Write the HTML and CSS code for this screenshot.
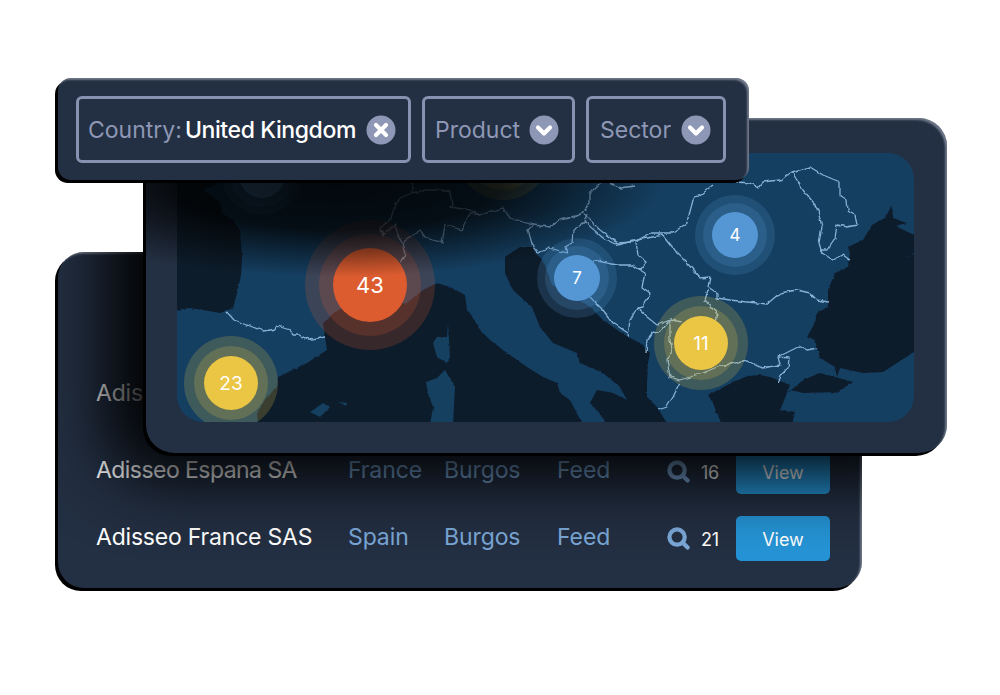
FILE: index.html
```html
<!DOCTYPE html>
<html lang="en">
<head>
<meta charset="utf-8">
<title>Supplier map</title>
<link rel="stylesheet" href="styles.css">
</head>
<body>
<main class="canvas">
  <section class="card table-card">
    <div class="row first-row">
      <span class="name">Adisseo</span>
    </div>
    <div class="row">
      <span class="name name-tight">Adisseo Espana SA</span><span class="link">France</span><span class="link">Burgos</span><span class="link">Feed</span>
      <span class="hits"><svg class="lens" viewBox="0 0 24 24"><circle cx="10.5" cy="10.5" r="8"/><path d="M16.5 16.5 21.5 21.5"/></svg><span class="count">16</span></span><button class="view">View</button>
    </div>
    <div class="row">
      <span class="name">Adisseo France SAS</span><span class="link">Spain</span><span class="link">Burgos</span><span class="link">Feed</span>
      <span class="hits"><svg class="lens" viewBox="0 0 24 24"><circle cx="10.5" cy="10.5" r="8"/><path d="M16.5 16.5 21.5 21.5"/></svg><span class="count">21</span></span><button class="view">View</button>
    </div>
    <div class="cast-shadow"></div>
  </section>

  <section class="card map-card">
    <div class="map">
      <svg class="geo" viewBox="177 153 737 269" aria-hidden="true">
        <defs>
          <filter id="rough" x="-5%" y="-5%" width="110%" height="110%">
            <feTurbulence type="fractalNoise" baseFrequency="0.14" numOctaves="2" seed="4"/>
            <feDisplacementMap in="SourceGraphic" scale="4" xChannelSelector="R" yChannelSelector="G"/>
          </filter>
          <filter id="coast" x="-5%" y="-5%" width="110%" height="110%">
            <feTurbulence type="fractalNoise" baseFrequency="0.22" numOctaves="2" seed="9"/>
            <feDisplacementMap in="SourceGraphic" scale="2.4" xChannelSelector="R" yChannelSelector="G"/>
          </filter>
        </defs>
        <g class="sea" filter="url(#coast)">
          <path d="M170 150H226L222 178 213 186 203 190 220 202 222 213 232 220 240 230 241 243 242 258 241 275 237 293 233 308 220 313 203 310 190 308 177 310H170Z"/>
          <path d="M258 425 257 413 266 398 277 387 278 377 293 370 307 363 327 350 323 323 337 310 360 306 385 308 407 303 423 290 437 283 450 287 465 295 467 310 470 313 480 330 490 340 507 353 527 367 543 377 557 383 560 393 570 400 583 425Z"/>
          <path d="M505 257 520 247 533 247 535 253 543 260 552 285 575 297 590 307 603 320 613 327 628 337 640 343 650 353 648 363 647 383 647 397 657 407 668 425H606L603 417 590 403 597 390 613 393 627 400 620 387 603 373 580 363 577 353 553 343 540 327 532 307 513 290 505 273Z"/>
          <path d="M708 395 722 388 733 382 748 376 760 375 770 377 790 385 783 403 780 410 795 412 792 425H722L713 403Z"/>
          <path d="M783 397 803 380 820 373 835 377 853 382 837 392 803 393 790 390Z"/>
          <path d="M872 225 885 218 892 205 893 218 907 223 895 226 914 235 920 235V250L907 257 920 252V350L914 352 883 372 863 373 840 368 837 377 835 367 820 358 815 340 807 337 815 323 817 313 828 307 828 290 835 273 848 267 850 253 848 247 863 240Z"/>
        </g>
        <g class="isle" filter="url(#coast)">
          <path d="M448 323 447 337 437 337 433 343 437 357 447 363 450 357Z"/>
          <path d="M445 370 437 378 426 382 428 393 433 407 430 425H453L455 387Z"/>
          <path d="M310 412 323 403 330 407 320 417Z"/>
          <path d="M338 402 347 403 346 406Z"/>
        </g>
        <g class="borders" filter="url(#rough)">
          <path d="M227 312 234 320 250 326 263 331 276 329 277 326 290 330 293 335 300 335 305 338 313 340 325 337"/>
          <path d="M412 183 412 193 425 190 440 190 450 192 452 205 450 207 470 210 480 215"/>
          <path d="M412 193 400 198 395 205 393 212 390 220 380 228 383 235 395 225 398 235 402 243 405 255 400 262"/>
          <path d="M402 243 420 230 425 237 442 243 445 225 462 230 470 213 480 215 503 208 510 218 533 225 550 227 560 220 580 215 590 203 590 193 600 183"/>
          <path d="M610 183 620 188 635 186"/>
          <path d="M583 213 600 230 617 243 633 242 650 233 673 233 687 223 693 200 713 185"/>
          <path d="M737 182 750 183 758 188 763 182 780 180 792 172 810 167 823 175 840 182 840 195 847 200 848 210 855 215 857 225 847 227 837 225 835 238 827 250 820 250"/>
          <path d="M792 172 803 190 818 210 822 227 819 243 822 253 833 260 843 255 850 260"/>
          <path d="M828 302 817 300 810 293 797 290 780 293 767 304 747 302 730 300 717 298"/>
          <path d="M663 235 677 253 687 263 700 278 710 277 708 287 717 293 717 298"/>
          <path d="M708 290 705 300 718 315 715 322"/>
          <path d="M667 360 670 377 680 380 703 373 717 367 747 360 762 368 780 365 778 357 800 346 807 350 817 348"/>
          <path d="M778 357 789 358 788 368 783 373 778 382"/>
          <path d="M680 383 673 397 667 407 658 410"/>
          <path d="M653 332 647 340 646 352"/>
          <path d="M653 332 658 333 670 320 670 340 672 350 667 360"/>
          <path d="M587 213 585 222 603 238 617 245 637 240 663 235"/>
          <path d="M585 222 573 230 572 243 565 247 567 253 550 248 538 253 533 247 528 230 533 225"/>
          <path d="M593 260 617 265 633 265 640 270 647 262 638 255 636 242"/>
          <path d="M640 270 645 273 642 287 650 293 643 307 637 308 630 320 628 337"/>
          <path d="M590 297 603 310 613 323 628 333"/>
          <path d="M637 308 647 317 657 325 670 320 683 322"/>
        </g>
      </svg>
      <span class="pin blue pin-a"></span>
      <span class="pin yellow pin-b"></span>
      <span class="pin orange pin-c">43</span>
      <span class="pin blue pin-d">7</span>
      <span class="pin blue pin-e">4</span>
      <span class="pin yellow pin-f">11</span>
      <span class="pin yellow pin-g">23</span>
    </div>
    <div class="bar-shadow"></div>
  </section>

  <section class="card filter-card">
    <div class="chip chip-country"><span class="label">Country:</span> <strong class="value">United Kingdom</strong>
      <svg class="chip-icon" viewBox="0 0 30 30"><circle cx="15" cy="15" r="14.5"/><path d="M10 10 20 20M20 10 10 20"/></svg>
    </div>
    <div class="chip chip-product"><span class="label">Product</span>
      <svg class="chip-icon" viewBox="0 0 30 30"><circle cx="15" cy="15" r="14.5"/><path d="M9 12.5 15 18.5 21 12.5"/></svg>
    </div>
    <div class="chip chip-sector"><span class="label">Sector</span>
      <svg class="chip-icon" viewBox="0 0 30 30"><circle cx="15" cy="15" r="14.5"/><path d="M9 12.5 15 18.5 21 12.5"/></svg>
    </div>
  </section>
</main>
</body>
</html>
```

FILE: styles.css
```css
* { box-sizing: border-box; }

html, body {
  margin: 0;
  height: 100%;
  background: #fff;
}

.canvas {
  position: relative;
  width: 1000px;
  height: 695px;
  overflow: hidden;
  font-family: "Inter", "Liberation Sans", sans-serif;
}

.card {
  position: absolute;
  background: #232f42;
  box-shadow: -3px 3px 0 #000, inset -2px 2px 2px rgba(215, 222, 235, .42);
}

/* back table card */
.table-card {
  left: 58px;
  top: 252px;
  width: 804px;
  height: 336px;
  border-radius: 26px;
  overflow: hidden;
  padding: 0 32px 27px 38px;
  display: flex;
  flex-direction: column;
  justify-content: flex-end;
  gap: 22px;
}

.cast-shadow {
  position: absolute;
  left: 88px;
  top: -134px;
  width: 801px;
  height: 335px;
  border-radius: 26px;
  box-shadow: -20px 6px 70px 18px #000;
}

.row {
  display: grid;
  grid-template-columns: 252px 96px 113px 110px 69px 94px;
  align-items: center;
  height: 45px;
  font-size: 23px;
  letter-spacing: -.2px;
}

.first-row { margin-bottom: 10px; }

.name { color: #fff; margin-top: -4px; }
.name-tight { letter-spacing: -.55px; }
.link { color: #7ba8d8; margin-top: -4px; letter-spacing: -.1px; }

.hits {
  display: flex;
  align-items: center;
  gap: 11px;
  margin-top: -1px;
}

.lens {
  width: 23px;
  height: 23px;
  fill: none;
  stroke: #7ba8d8;
  stroke-width: 4.4;
  stroke-linecap: round;
}

.count {
  margin-top: 3px;
  font-size: 18px;
  color: #fff;
}

.view {
  width: 94px;
  height: 45px;
  border: 0;
  border-radius: 5px;
  padding: 2px 0 0;
  background: #2594d6;
  color: #fff;
  font: 18px "Inter", "Liberation Sans", sans-serif;
}

/* map card */
.map-card {
  left: 146px;
  top: 118px;
  width: 801px;
  height: 335px;
  border-radius: 28px;
  overflow: hidden;
  padding: 35px 33px 31px 31px;
}

.map {
  position: relative;
  height: 269px;
  border-radius: 26px;
  overflow: hidden;
  background: #153f61;
}

.geo {
  display: block;
  width: 737px;
  height: 269px;
}

.sea path { fill: #0e1a2a; }
.isle path { fill: #153f61; }

.borders path {
  fill: none;
  stroke: #86b0d6;
  stroke-width: 1.3;
  stroke-linejoin: round;
}

.pin {
  position: absolute;
  display: flex;
  align-items: center;
  justify-content: center;
  border-radius: 50%;
  color: #fff;
  font-size: 19px;
  transform: translate(-50%, -50%);
}

.orange { background: #dc5c30; width: 74px; height: 74px; font-size: 22px;
  box-shadow: 0 0 0 14px rgba(220, 92, 48, .2), 0 0 0 28px rgba(220, 92, 48, .2); }
.yellow { background: #ebc644; width: 54px; height: 54px;
  box-shadow: 0 0 0 10px rgba(235, 198, 68, .2), 0 0 0 20px rgba(235, 198, 68, .2); }
.blue { background: #5597d4; width: 46px; height: 46px; font-size: 17px;
  box-shadow: 0 0 0 9px rgba(85, 151, 212, .2), 0 0 0 17px rgba(85, 151, 212, .2); }

.pin-a { left: 85px; top: 22px; }
.pin-b { left: 326px; top: 0; }
.pin-c { left: 193px; top: 132px; }
.pin-d { left: 400px; top: 125px; }
.pin-e { left: 558px; top: 82px; }
.pin-f { left: 524px; top: 190px; }
.pin-g { left: 54px; top: 230px; }

.bar-shadow {
  position: absolute;
  left: 0;
  top: 0;
  width: 100%;
  height: 100%;
  background: radial-gradient(ellipse 330px 95px at 190px 64px, rgba(0, 0, 0, .88) 0, rgba(0, 0, 0, .78) 50%, rgba(0, 0, 0, 0) 100%);
}

/* filter bar */
.filter-card {
  left: 58px;
  top: 78px;
  width: 691px;
  height: 102px;
  border-radius: 13px;
  display: flex;
  align-items: flex-start;
  gap: 11px;
  padding: 18px 0 0 18px;
}

.chip {
  display: flex;
  align-items: center;
  justify-content: space-between;
  height: 67px;
  border: 3px solid #8791b0;
  border-radius: 6px;
  padding: 0 12px 0 9px;
  font-size: 23px;
  white-space: nowrap;
}

.chip-country { width: 335px; }
.chip-product { width: 153px; padding-left: 10px; padding-right: 13px; }
.chip-sector { width: 140px; padding-left: 11px; }

.label { color: #8e97b5; }
.value { color: #fff; font-weight: 500; letter-spacing: -.4px; margin-left: 3px; margin-right: auto; }

.chip-icon { width: 30px; height: 30px; flex: none; }
.chip-icon circle { fill: #8e97b5; }
.chip-icon path {
  fill: none;
  stroke: #fff;
  stroke-width: 4.2;
  stroke-linecap: round;
  stroke-linejoin: round;
}
```
